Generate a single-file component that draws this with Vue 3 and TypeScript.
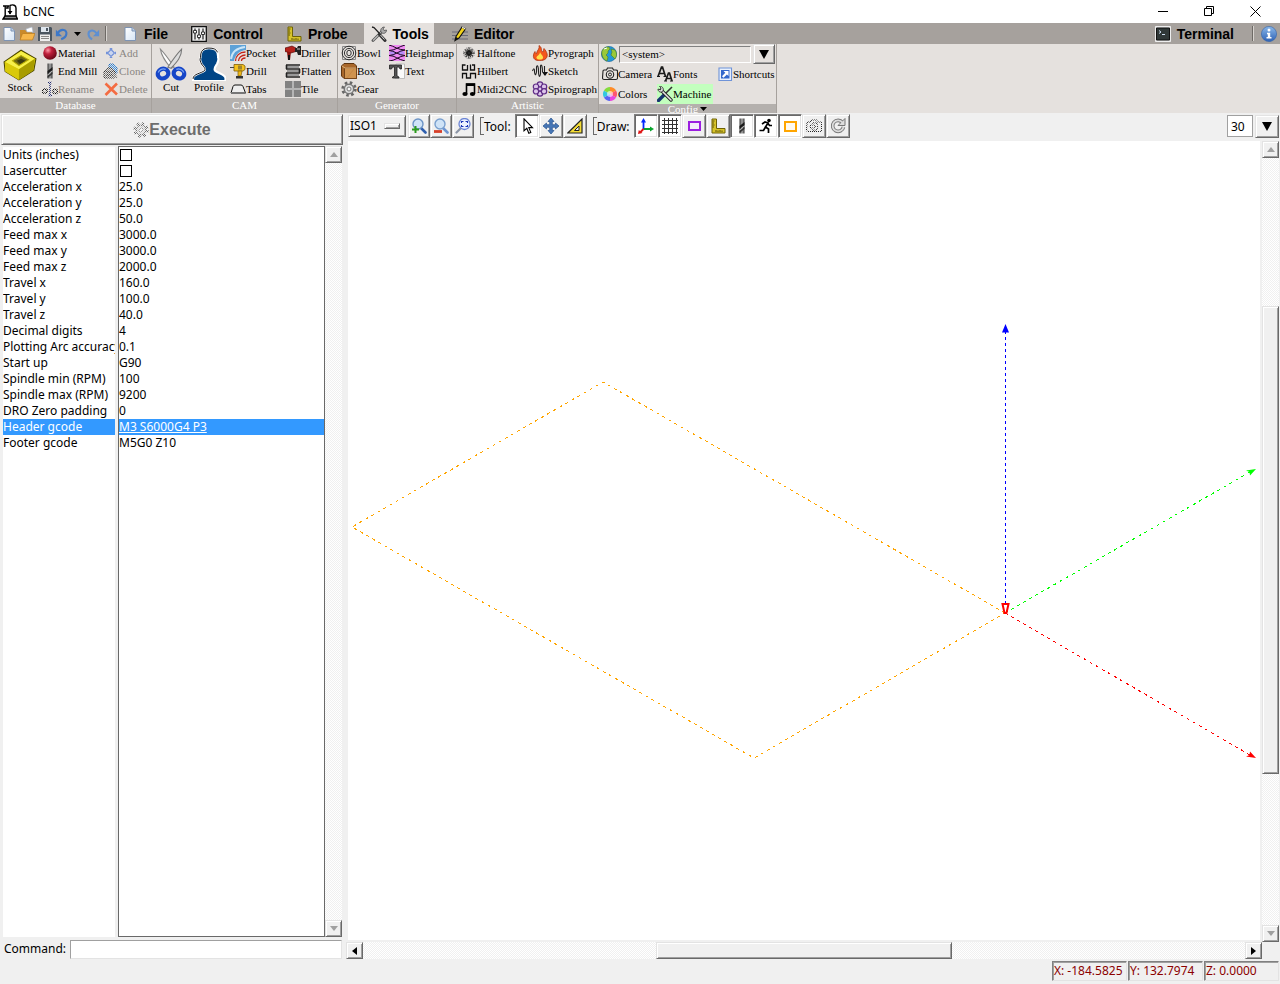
<script setup lang="ts">
import { ref } from 'vue'

interface Tool {
  label: string
  icon: string
  disabled?: boolean
  active?: boolean
  tone?: string
}

interface Group {
  name: string
  cls: string
  big: Tool[]
  columns: Tool[][]
}

interface Setting {
  name: string
  value: string | boolean
}

const tabs: Tool[] = [
  { label: 'File', icon: 'new' },
  { label: 'Control', icon: 'control' },
  { label: 'Probe', icon: 'ruler' },
  { label: 'Tools', icon: 'tools' },
  { label: 'Editor', icon: 'editor' },
]
const activeTab = ref('Tools')

const groups: Group[] = [
  {
    name: 'Database',
    cls: 'database',
    big: [{ label: 'Stock', icon: 'stock' }],
    columns: [
      [
        { label: 'Material', icon: 'material' },
        { label: 'End Mill', icon: 'endmill' },
        { label: 'Rename', icon: 'rename', disabled: true, tone: 'dither' },
      ],
      [
        { label: 'Add', icon: 'add', disabled: true, tone: 'faint' },
        { label: 'Clone', icon: 'clone', disabled: true, tone: 'dither' },
        { label: 'Delete', icon: 'delete', disabled: true, tone: 'faint' },
      ],
    ],
  },
  {
    name: 'CAM',
    cls: 'cam',
    big: [
      { label: 'Cut', icon: 'cut' },
      { label: 'Profile', icon: 'profile' },
    ],
    columns: [
      [
        { label: 'Pocket', icon: 'pocket' },
        { label: 'Drill', icon: 'drill' },
        { label: 'Tabs', icon: 'tabs' },
      ],
      [
        { label: 'Driller', icon: 'driller' },
        { label: 'Flatten', icon: 'flatten' },
        { label: 'Tile', icon: 'tile' },
      ],
    ],
  },
  {
    name: 'Generator',
    cls: 'generator',
    big: [],
    columns: [
      [
        { label: 'Bowl', icon: 'bowl' },
        { label: 'Box', icon: 'box' },
        { label: 'Gear', icon: 'gear' },
      ],
      [
        { label: 'Heightmap', icon: 'heightmap' },
        { label: 'Text', icon: 'text' },
      ],
    ],
  },
  {
    name: 'Artistic',
    cls: 'artistic',
    big: [],
    columns: [
      [
        { label: 'Halftone', icon: 'halftone' },
        { label: 'Hilbert', icon: 'hilbert' },
        { label: 'Midi2CNC', icon: 'midi' },
      ],
      [
        { label: 'Pyrograph', icon: 'pyro' },
        { label: 'Sketch', icon: 'sketch' },
        { label: 'Spirograph', icon: 'spiro' },
      ],
    ],
  },
]

const config: Tool[] = [
  { label: 'Camera', icon: 'camera' },
  { label: 'Fonts', icon: 'fonts' },
  { label: 'Shortcuts', icon: 'shortcuts' },
  { label: 'Colors', icon: 'colors' },
  { label: 'Machine', icon: 'machine', active: true },
]

const settings = ref<Setting[]>([
  { name: 'Units (inches)', value: false },
  { name: 'Lasercutter', value: false },
  { name: 'Acceleration x', value: '25.0' },
  { name: 'Acceleration y', value: '25.0' },
  { name: 'Acceleration z', value: '50.0' },
  { name: 'Feed max x', value: '3000.0' },
  { name: 'Feed max y', value: '3000.0' },
  { name: 'Feed max z', value: '2000.0' },
  { name: 'Travel x', value: '160.0' },
  { name: 'Travel y', value: '100.0' },
  { name: 'Travel z', value: '40.0' },
  { name: 'Decimal digits', value: '4' },
  { name: 'Plotting Arc accuracy', value: '0.1' },
  { name: 'Start up', value: 'G90' },
  { name: 'Spindle min (RPM)', value: '100' },
  { name: 'Spindle max (RPM)', value: '9200' },
  { name: 'DRO Zero padding', value: '0' },
  { name: 'Header gcode', value: 'M3 S6000G4 P3' },
  { name: 'Footer gcode', value: 'M5G0 Z10' },
])
const selected = ref('Header gcode')

const zoomButtons = [
  { label: 'Zoom in', icon: 'zoomin' },
  { label: 'Zoom out', icon: 'zoomout' },
  { label: 'Fit to screen', icon: 'zoomfit' },
]
const toolButtons = ref<Tool[]>([
  { label: 'Select', icon: 'pointer', active: true },
  { label: 'Pan', icon: 'pan' },
  { label: 'Ruler', icon: 'triangle' },
])
const drawButtons = ref<Tool[]>([
  { label: 'Axes', icon: 'axes', active: true },
  { label: 'Grid', icon: 'grid', active: true },
  { label: 'Margins', icon: 'margins' },
  { label: 'Probe', icon: 'ruler' },
  { label: 'Cutting paths', icon: 'endmill', active: true },
  { label: 'Rapid paths', icon: 'rapid', active: true },
  { label: 'Workarea', icon: 'workarea', active: true },
  { label: 'Camera view', icon: 'camera', disabled: true, tone: 'dither' },
  { label: 'Refresh', icon: 'refresh', disabled: true },
])

const view = ref('ISO1')
const controller = ref('<system>')
const drawTime = ref('30')
const command = ref('')
const position = ['X: -184.5825', 'Y: 132.7974', 'Z: 0.0000']
</script>

<template>
  <svg class="sprite" aria-hidden="true">
    <defs>
      <linearGradient id="gBlue" x1="0" y1="0" x2="0" y2="1">
        <stop offset="0" stop-color="#8ab8ea" /><stop offset="1" stop-color="#2f62b5" />
      </linearGradient>
      <linearGradient id="gSteel" x1="0" y1="0" x2="1" y2="0">
        <stop offset="0" stop-color="#333" /><stop offset=".5" stop-color="#aaa" /><stop offset="1" stop-color="#333" />
      </linearGradient>
      <radialGradient id="gRed" cx=".35" cy=".3" r=".7">
        <stop offset="0" stop-color="#ff9aa8" /><stop offset=".4" stop-color="#c0203c" /><stop offset="1" stop-color="#6d0818" />
      </radialGradient>
      <linearGradient id="gPage" x1="0" y1="0" x2="1" y2="1">
        <stop offset="0" stop-color="#fff" /><stop offset="1" stop-color="#d5e4f5" />
      </linearGradient>
    </defs>
    <symbol id="i-app" viewBox="0 0 16 16">
      <g fill="none" stroke="#000" stroke-width="1.4">
        <path d="M1 2h6M3.2 2v10M6 2v2H4M8 1.5c3-1.500 6 0 6 2.500V12M8 5v5M8 1v5" /><path d="M3 12h11l1.500 3H1z" fill="#888" />
      </g>
      <path d="M5.500 7h5L8 10.500z" />
    </symbol>
    <symbol id="i-new" viewBox="0 0 16 16">
      <path d="M3 1.500h7l3.500 3.500v9.500H3z" fill="url(#gPage)" stroke="#7d93b3" /><path d="M10 1.500v3.500h3.500" fill="#bcd0ea" stroke="#7d93b3" />
    </symbol>
    <symbol id="i-open" viewBox="0 0 16 16">
      <path d="M1 4h5l1.500 1.500H13V13H1z" fill="#c98a2b" /><path d="M7 3l6-2 1 5H8z" fill="#fff" stroke="#a9b6c8" stroke-width=".6" />
      <path d="M1 14L3.500 7.500H16L13.500 14z" fill="#f6b64a" stroke="#b97a1c" stroke-width=".7" />
    </symbol>
    <symbol id="i-save" viewBox="0 0 16 16">
      <path d="M1 1h13l1 1v13H1z" fill="#4a5560" /><path d="M4 1h8v5H4z" fill="#dfe6ee" /><path d="M9 2h2v3H9z" fill="#4a5560" /><path d="M3 8.500h10V15H3z" fill="#eee" /><path d="M4 10.500h8M4 12.500h8" stroke="#888" />
    </symbol>
    <symbol id="i-undo" viewBox="0 0 16 16">
      <path d="M3 7c4-6 11-4 10 1-.4 3-3 5-6 6" fill="none" stroke="#3d78c8" stroke-width="2.400" /><path d="M1 3v7.500h7z" fill="#3d78c8" />
    </symbol>
    <symbol id="i-redo" viewBox="0 0 16 16">
      <path d="M12 7C8 2 2 4 3 9c.4 3 2 4 4 5" fill="none" stroke="#5d8fd2" stroke-width="2.400" /><path d="M15 3v7.500H8z" fill="#5d8fd2" />
    </symbol>
    <symbol id="i-control" viewBox="0 0 16 16">
      <path d="M.7.7h14.600v14.600H.7z" fill="#eee" stroke="#111" stroke-width="1.300" /><path d="M4 2.500v11M8 2.500v11M12 2.500v11" stroke="#222" stroke-width="1.200" />
      <path d="M2.500 4.500h3v2.500h-3zM6.500 9h3v2.500h-3zM10.500 6h3v2.500h-3z" fill="#fff" stroke="#222" stroke-width=".9" />
    </symbol>
    <symbol id="i-ruler" viewBox="0 0 16 16">
      <path d="M2 1h4.500v9.500H15V15H2z" fill="#d8c42a" stroke="#6e6205" /><path d="M2.500 3h2M2.500 5h1.500M2.500 7h2M2.500 9h1.500M6 14v-2M8 14v-1.500M10 14v-2M12 14v-1.500" stroke="#3d3600" stroke-width=".8" />
    </symbol>
    <symbol id="i-tools" viewBox="0 0 16 16">
      <path d="M2 14.500L11 5.500" stroke="#555" stroke-width="2.800" stroke-linecap="round" /><path d="M2 14.500L11 5.500" stroke="#bbb" stroke-width="1.200" />
      <path d="M10 6c-1-3 1-5 3.500-5L12 3l1 1.500 2.500-.5c0 3-2.500 4-4.500 3z" fill="#aaa" stroke="#444" stroke-width=".7" />
      <path d="M1 1l2 .5L9 8" fill="none" stroke="#222" stroke-width="1.300" /><path d="M8.500 8.500L14 14.500" stroke="#333" stroke-width="3" stroke-linecap="round" /><path d="M9.500 9L13.500 13.500" stroke="#ddd" stroke-width="1" />
    </symbol>
    <symbol id="i-editor" viewBox="0 0 16 16">
      <path d="M0 6h16M0 9.500h16M0 13h16" stroke="#6b6b78" stroke-width="1.100" /><path d="M3 14.500l1-4L10 1l3.500 2L7 12z" fill="#f3d21b" stroke="#111" stroke-width="1.100" /><path d="M3 14.500l1-3.500 2.500 1.500z" fill="#111" /><path d="M10 1l3.500 2" stroke="#fff" />
    </symbol>
    <symbol id="i-terminal" viewBox="0 0 16 16">
      <path d="M.5.5h15v15H.5z" fill="#ddd" stroke="#eee" /><path d="M1.500 2h13v12h-13z" fill="#303838" stroke="#111" /><path d="M4 4.500l2 1.500-2 1.500M7 8.500h3" stroke="#cde" fill="none" />
    </symbol>
    <symbol id="i-info" viewBox="0 0 16 16">
      <circle cx="8" cy="8" r="7.600" fill="url(#gBlue)" stroke="#3465ac" stroke-width=".6" /><circle cx="8" cy="4" r="1.500" fill="#fff" /><path d="M6 6.700h3.200V11H10.500v1.500h-5V11h1.300V8.200H6z" fill="#fff" />
    </symbol>
    <symbol id="i-stock" viewBox="0 0 32 32">
      <path d="M1 14L17 3l14 8-2 11-14 9L2 23z" fill="#e5d800" stroke="#4d4800" /><path d="M2 14L17 4l13 7-15 10z" fill="#f7f04a" /><path d="M2 14l13 7v10L2 23z" fill="#d9c90a" /><path d="M15 21l15-10-1.500 11L15 31z" fill="#a89c00" />
      <path d="M9 13l8-5 7 4-9 5.500z" fill="#6c6713" stroke="#b7ab00" /><path d="M13 13l4-2 4 2-5 3z" fill="#3c3a10" />
    </symbol>
    <symbol id="i-material" viewBox="0 0 16 16"><circle cx="8" cy="8" r="6.800" fill="url(#gRed)" /></symbol>
    <symbol id="i-endmill" viewBox="0 0 16 16">
      <path d="M5.500.5h5v15h-5z" fill="url(#gSteel)" /><path d="M5.500 8l5-4v3l-5 4z" fill="#1c1c1c" /><path d="M5.500 13l5-4v2l-5 4z" fill="#333" /><path d="M6 12l4-4" stroke="#bbb" stroke-width=".8" />
    </symbol>
    <symbol id="i-rename" viewBox="0 0 16 16">
      <path d="M5 8.500c-3-1-4.500 0-4.500 2s3 2.500 4.500 0v-2.500 4M11 10.500c0-3 4.500-3 4.500 0s-4.500 2.500-4.500 0" fill="none" stroke="#111" stroke-width="1.600" /><path d="M6 1.500h4M6 14.500h4M8 1.500v13" stroke="#222c70" stroke-width="1.600" />
    </symbol>
    <symbol id="i-add" viewBox="0 0 16 16"><path d="M8 3v10M3 8h10" stroke="#5a80d8" stroke-width="2.500" stroke-dasharray="2 1" /><path d="M8 4.500L11.500 8 8 11.500 4.500 8z" fill="#c5d4f4" stroke="#5a80d8" stroke-width="1.200" /></symbol>
    <symbol id="i-clone" viewBox="0 0 16 16">
      <path d="M6 1h5l3 3v6H6z" fill="#3d8fe0" stroke="#1464b4" /><path d="M1 15V9l3-4h5l3 4v6z" fill="#888" stroke="#222" /><path d="M3 9h7M3 12h7" stroke="#111" /><path d="M12 10l3 5h-6" fill="#777" />
    </symbol>
    <symbol id="i-delete" viewBox="0 0 16 16"><path d="M2.500 2.500l11.500 11M14 2.500L2.500 14" stroke="#f8501c" stroke-width="2.600" /></symbol>
    <symbol id="i-cut" viewBox="0 0 32 32">
      <path d="M6 2c1 7 5 12 10 18l3-1C15 13 11 7 6 2z" fill="#fff" stroke="#888" /><path d="M26 2c0 7-4 12-10 18l-3-1C17 13 21 7 26 2z" fill="#ddd" stroke="#777" />
      <g fill="none" stroke="#1746c8" stroke-width="4"><ellipse cx="8.500" cy="25" rx="5" ry="4.500" transform="rotate(-25 8.500 25)" /><ellipse cx="23.500" cy="25" rx="5" ry="4.500" transform="rotate(25 23.500 25)" /></g>
      <path d="M4 24c1-3 4-4 7-3M21 21c3-1 6 0 7 3" fill="none" stroke="#7aa6f5" stroke-width="1.200" />
    </symbol>
    <symbol id="i-profile" viewBox="0 0 32 32">
      <path d="M1 32v-3c1-4 8-4 11-7 1-2-1-3-3-6-1-2-2-4-1-6C8 3 11 1 16 1s9 2 8.500 9c1 2 0 4-1 6-2 3-3 4-2 6 3 3 9 3 10 7v3z" fill="#004586" stroke="#fff" stroke-width="2" /><path d="M1 30c0-5 8-5 11-8 1-2-1-3-3-6-1-2-2-4-1-6C8 3 11 1 16 1c4 0 7 1 8 4" fill="none" stroke="#111" stroke-width=".9" />
    </symbol>
    <symbol id="i-pocket" viewBox="0 0 16 16">
      <path d="M0 0h16v5C10 5 5 10 4 16H0z" fill="#5da2d8" /><path d="M1 14C2 7 7 3 15 2" fill="none" stroke="#cce6f8" stroke-width="2" /><g fill="none" stroke="#c42418" stroke-width="1.300"><path d="M5.500 16c0-5 4-9 10-9M8.500 16c0-3.500 3-6 7-6M11.500 16c0-2 1.500-3 4-3" /></g>
    </symbol>
    <symbol id="i-drill" viewBox="0 0 16 16">
      <path d="M4 1.500h9l2 1.500v3.500L13 8H4z" fill="#f5c21d" stroke="#80600a" stroke-width=".8" /><path d="M0 4.500h4M9 2.500v4M11 2.500v4" stroke="#444" /><path d="M8 8h4l-1 5H8z" fill="#f0b818" stroke="#80600a" stroke-width=".7" /><path d="M6 13h7v2.500H6z" fill="#333" />
    </symbol>
    <symbol id="i-tabs" viewBox="0 0 16 16"><path d="M1 12l2-6.500q.5-1.500 2-1.500h6q1.500 0 2 1.500l2.500 6.500z" fill="#eee" stroke="#111" /><path d="M1 12h14.500" stroke="#777" stroke-width="2" /></symbol>
    <symbol id="i-driller" viewBox="0 0 16 16">
      <path d="M0 3l7-2 4 2v3.500L6 8 0 6.500z" fill="#b5231c" stroke="#400" stroke-width=".6" /><path d="M2 7h4l-1 8H3z" fill="#8b1510" /><path d="M10 3h2l1-2h3v9h-3l-1-3h-2z" fill="#222" /><path d="M12 4h3" stroke="#ccc" /><path d="M3 10h2v5H3z" fill="#111" />
    </symbol>
    <symbol id="i-flatten" viewBox="0 0 16 16">
      <path d="M1 2h14M1 6h14M1 10h14M1 14h14" stroke="#222" stroke-width="1.600" /><path d="M1 4h13M2 8h13M1 12h13" stroke="#999" stroke-width="2" /><path d="M14.500 6v4M1.500 2v4M1.500 10v4" stroke="#222" stroke-width="1.600" />
    </symbol>
    <symbol id="i-tile" viewBox="0 0 16 16"><path d="M0 0h7v7H0zM9 0h7v7H9zM0 9h7v7H0zM9 9h7v7H9z" fill="#828282" /><path d="M7 0h2v16H7zM0 7h16v2H0z" fill="#b5b5b5" /></symbol>
    <symbol id="i-bowl" viewBox="0 0 16 16"><path d="M1.500 1.500h13v13h-13z" fill="none" stroke="#888" /><g fill="none" stroke="#333"><circle cx="8" cy="8" r="6.800" /><circle cx="8" cy="8" r="4.600" /><ellipse cx="8" cy="8" rx="2.200" ry="2.800" /></g></symbol>
    <symbol id="i-box" viewBox="0 0 16 16"><path d="M.5 3L3 .5h10L15.500 3v12.500H3L.5 13z" fill="#a9672a" stroke="#5f3510" /><path d="M3.500 5h12v10.500h-12z" fill="#cf934f" stroke="#75451a" /><path d="M1 3l3 2h11" stroke="#e3b478" fill="none" /><path d="M6 15l7-9" stroke="#c58745" /></symbol>
    <symbol id="i-gear" viewBox="0 0 16 16">
      <circle cx="8" cy="8" r="6.300" fill="none" stroke="#666" stroke-width="2.800" stroke-dasharray="2.500 2.450" /><circle cx="8" cy="8" r="4.700" fill="#ddd" stroke="#777" stroke-width="1.500" /><circle cx="8" cy="8" r="2" fill="#f7f7f7" stroke="#777" />
    </symbol>
    <symbol id="i-heightmap" viewBox="0 0 16 16"><path d="M0 0h16v16H0z" fill="#f08cf4" /><path d="M0 8l4-3 4 3-4 3zM8 8l4-3 4 3-4 3z" fill="#b78cf8" /><path d="M0 0c5 1 9 5 16 5M0 5.500c6 0 10-4 16-5.500M0 5.500c5 0 10 5 16 5M0 10.500c6 0 10-5 16-5.500M0 10.500c6 0 9 4 16 5.500M0 16c6 0 10-5 16-5.500" stroke="#1c0a20" fill="none" stroke-width="1" /></symbol>
    <symbol id="i-text" viewBox="0 0 16 16"><path d="M7 1h8.500v14.500H6z" fill="#fafafa" stroke="#aaa" stroke-width=".7" /><path d="M.5 2h12v4h-1.500L10 4H8v9l2 1v1H3.500v-1l2-1V4h-2l-1 2H.5z" fill="#555" stroke="#222" stroke-width=".8" /></symbol>
    <symbol id="i-halftone" viewBox="0 0 16 16"><circle cx="8" cy="8" r="3" fill="#111" /><g fill="none" stroke="#333" stroke-dasharray="1 1"><circle cx="8" cy="8" r="4" stroke-width="1.500" /><circle cx="8" cy="8" r="5.500" stroke="#777" /></g><path d="M8 2v12M2 8h12M4 4l8 8M12 4l-8 8" stroke="#333" stroke-width=".6" /></symbol>
    <symbol id="i-hilbert" viewBox="0 0 16 16"><path d="M4.500 1.500h-3v5h5v-5M9.500 1v5.500h4v-5H11M1.500 15v-5h4v4.500h4V10h5v5" transform="translate(0 .5)" fill="none" stroke="#111" stroke-width="1.300" /></symbol>
    <symbol id="i-midi" viewBox="0 0 16 16"><path d="M5.500 13V3h8v10" fill="none" stroke="#000" stroke-width="1.600" /><path d="M5 2.500h9V5H5z" /><ellipse cx="4" cy="13" rx="2.600" ry="1.900" /><ellipse cx="11.500" cy="13" rx="2.600" ry="1.900" /></symbol>
    <symbol id="i-pyro" viewBox="0 0 16 16"><path d="M7 .5c4 2.500 1 5 4 6.500 1-1 0-2 1-3.500 3 3.500 4.500 7 2 10-3 3-10 3-12 0C.5 10.500 2 8 3 6.500c0 1 .5 2 1.500 2C5 5 8 4 7 .5z" fill="#f4581c" stroke="#a42808" stroke-width=".7" /><path d="M8 7c1 3 3.500 3.500 3 6-.5 2-5.500 2-6.500 0C4 11 8 10 8 7z" fill="#ffe04a" /></symbol>
    <symbol id="i-sketch" viewBox="0 0 16 16"><path d="M.5 8c1-3 2-3 2 0s1 6 2 1V4c1-3 2 0 2 4s1 8 2 3V3c1-3 2 1 2 6M12.500 3v9" fill="none" stroke="#222" stroke-width="1.100" /><path d="M10 9h6l-3 4z" fill="#111" /></symbol>
    <symbol id="i-spiro" viewBox="0 0 16 16"><g fill="#dcc5ea" stroke="#5e2b85" stroke-width="1.200"><circle cx="8" cy="3.500" r="2.700" /><circle cx="8" cy="12.500" r="2.700" /><circle cx="4" cy="5.700" r="2.700" /><circle cx="12" cy="5.700" r="2.700" /><circle cx="4" cy="10.300" r="2.700" /><circle cx="12" cy="10.300" r="2.700" /><circle cx="8" cy="8" r="2" /></g></symbol>
    <symbol id="i-globe" viewBox="0 0 16 16"><circle cx="8" cy="8" r="7.600" fill="#2498d8" stroke="#0f5d93" stroke-width=".6" /><path d="M1 5c2-4 5-4 7-4l1 2-2 2v2L5 9l2 2-1 4C3 14 0 10 1 5zM10 3l4 1c2 3 2 6 0 9l-2-2-2-2 1-3z" fill="#9ac93a" stroke="#43731a" stroke-width=".5" /><path d="M3 3l3-1" stroke="#fff" /></symbol>
    <symbol id="i-camera" viewBox="0 0 16 16"><path d="M1 5q0-1 1-1h2.500l1-2h5l1 2H14q1.500 0 1.500 1v7q0 1.500-1.500 1.500H2Q.5 13.500.5 12z" fill="none" stroke="#222" stroke-width="1.100" /><circle cx="8" cy="8.500" r="3.700" fill="none" stroke="#222" stroke-width="1.100" /><circle cx="8" cy="8.500" r="1.500" fill="none" stroke="#222" /></symbol>
    <symbol id="i-fonts" viewBox="0 0 16 16"><path d="M1 10.500L4.500 1h1l3 9.500M2.500 7.500h5M8.500 15l3-8h1l2.500 8M9.500 12.500h4.500" fill="none" stroke="#1a1a1a" stroke-width="1.700" /><path d="M0 10.500h3M6.500 10.500h3M7 15h3M13 15h3" stroke="#1a1a1a" /></symbol>
    <symbol id="i-shortcuts" viewBox="0 0 16 16"><path d="M2 2h12.500v12.500H2z" fill="#e9f1fd" stroke="#6f93d8" stroke-width="1.100" /><path d="M4 4h8.500v8.500H4z" fill="#3468cc" /><path d="M6.500 5h5v5l-1.600-1.600L6.500 11.800 5 10.300l3.300-3.500z" fill="#fff" /></symbol>
    <symbol id="i-colors" viewBox="0 0 16 16">
      <path d="M8 8V1a7 7 0 0 1 6.060 3.500z" fill="#ff8c28" /><path d="M8 8l6.060-3.500a7 7 0 0 1 0 7z" fill="#ff5570" /><path d="M8 8l6.060 3.500A7 7 0 0 1 8 15z" fill="#e745e0" /><path d="M8 8v7a7 7 0 0 1-6.060-3.500z" fill="#5a62f5" /><path d="M8 8l-6.060 3.500a7 7 0 0 1 0-7z" fill="#32c8e0" /><path d="M8 8L1.940 4.500A7 7 0 0 1 8 1z" fill="#86dc3c" /><circle cx="8" cy="8" r="3" fill="#fff" opacity=".6" />
    </symbol>
    <symbol id="i-machine" viewBox="0 0 16 16">
      <path d="M15 1l-8 8" stroke="#333" stroke-width="1.600" /><path d="M7.500 8.500L1.500 14.500" stroke="#15356e" stroke-width="3.400" stroke-linecap="round" /><path d="M4 4l10 10" stroke="#222" stroke-width="3.400" stroke-linecap="round" /><path d="M4 4l10 10" stroke="#e6e6e6" stroke-width="1.600" stroke-linecap="round" /><path d="M1 3l2.500 1L4 2 2.500.5C5 0 7 2 6 5 4 7 1 6 1 3z" fill="#e6e6e6" stroke="#222" stroke-width=".8" />
    </symbol>
    <symbol id="i-zoomin" viewBox="0 0 16 16"><path d="M9.500 9.500l5 5" stroke="#2f5fae" stroke-width="2.600" stroke-linecap="round" /><circle cx="7" cy="6" r="5" fill="#cfe3f7" stroke="#6c94c6" stroke-width="1.400" /><path d="M4.500 8v7M1 11.500h7" stroke="#2a9a1c" stroke-width="2" /></symbol>
    <symbol id="i-zoomout" viewBox="0 0 16 16"><path d="M9.500 9.500l5 5" stroke="#6f95d2" stroke-width="2.600" stroke-linecap="round" /><circle cx="7" cy="6" r="5" fill="#cfe3f7" stroke="#7aa0cf" stroke-width="1.400" /><path d="M1 13.500h8" stroke="#d6402a" stroke-width="2.800" /></symbol>
    <symbol id="i-zoomfit" viewBox="0 0 16 16"><path d="M6.500 9.500l-5 5" stroke="#8a94a6" stroke-width="2.200" stroke-linecap="round" /><circle cx="9.500" cy="6" r="5.500" fill="#eef3ff" stroke="#6d86d6" stroke-width="1.300" /><path d="M6.500 5V3.500h2M10.500 3.500h2V5M12.500 7v1.500h-2M8.500 8.500h-2V7" fill="none" stroke="#1c36b8" stroke-width="1.100" /></symbol>
    <symbol id="i-pointer" viewBox="0 0 16 16"><path d="M5 .8v12l2.800-2.500 2 4.900 2-.8-2-4.800h3.700z" fill="#fff" stroke="#000" stroke-width="1.100" /></symbol>
    <symbol id="i-pan" viewBox="0 0 16 16"><path d="M8 0l3 3.500H9.300v3.200h3.200V5L16 8l-3.500 3V9.300H9.300v3.200H11L8 16l-3-3.500h1.700V9.300H3.500V11L0 8l3.500-3v1.700h3.200V3.500H5z" fill="#4878b8" stroke="#24508e" stroke-width=".7" /></symbol>
    <symbol id="i-triangle" viewBox="0 0 16 16"><path d="M.8 15L15 1v14z" fill="#f4dc35" stroke="#222" stroke-width="1.200" /><path d="M7.500 12.500l4.500-4.500v4.500z" fill="#efefef" stroke="#222" /></symbol>
    <symbol id="i-axes" viewBox="0 0 16 16"><path d="M5.500 11V2.500" stroke="#0026ff" stroke-width="1.800" /><path d="M3 4.500L5.500 0 8 4.500z" fill="#0026ff" /><path d="M5.500 11H13" stroke="#08a52c" stroke-width="2" /><path d="M12 8.500l4 2.500-4 2.500z" fill="#08a52c" /><path d="M5.500 11L2 14.500" stroke="#e01414" stroke-width="1.800" /><path d="M0 16l.8-4L4.500 15z" fill="#e01414" /></symbol>
    <symbol id="i-grid" viewBox="0 0 16 16"><path d="M2.500 0v16M6.500 0v16M10.500 0v16M14.500 0v16M0 2.500h16M0 6.500h16M0 10.500h16M0 14.500h16" stroke="#333" shape-rendering="crispEdges" /></symbol>
    <symbol id="i-margins" viewBox="0 0 16 16"><path d="M3 4h11v8H3z" fill="#f4ecfa" stroke="#9b1ee0" stroke-width="2" /></symbol>
    <symbol id="i-workarea" viewBox="0 0 16 16"><path d="M3 4h11v9H3z" fill="#fffaf0" stroke="#ffa500" stroke-width="2" /></symbol>
    <symbol id="i-rapid" viewBox="0 0 16 16"><circle cx="11" cy="2.500" r="1.800" /><path d="M4 6l3-2 3 1-2.500 4 3 2v4M7.500 9l-2 3.500H1.500M10 5.500l1.500 2H14" fill="none" stroke="#000" stroke-width="1.700" /></symbol>
    <symbol id="i-refresh" viewBox="0 0 16 16"><path d="M12.500 4.500A5.500 5.500 0 1 0 13.500 9" fill="none" stroke="#777" stroke-width="3.600" /><path d="M15 .5v7H8z" fill="#ddd" stroke="#777" /><path d="M12.500 4.500A5.500 5.500 0 1 0 13.500 9" fill="none" stroke="#ddd" stroke-width="1.800" /></symbol>
    <symbol id="i-up" viewBox="0 0 8 5"><path d="M0 5L4 0l4 5z" fill="currentColor" /></symbol>
    <symbol id="i-down" viewBox="0 0 8 5" preserveAspectRatio="none"><path d="M0 0h8L4 5z" fill="currentColor" /></symbol>
    <symbol id="i-left" viewBox="0 0 5 8"><path d="M5 0v8L0 4z" fill="currentColor" /></symbol>
    <symbol id="i-right" viewBox="0 0 5 8"><path d="M0 0v8l5-4z" fill="currentColor" /></symbol>
  </svg>

  <div class="window">
    <header class="titlebar">
      <svg class="ic app-icon"><use href="#i-app" /></svg>
      <span class="title">bCNC</span>
      <button class="win-btn" aria-label="Minimize"><svg viewBox="0 0 11 11"><path d="M0 5.500h10" /></svg></button>
      <button class="win-btn" aria-label="Restore"><svg viewBox="0 0 11 11"><path d="M.5 2.500h7v7h-7zM2.500 2.500v-2h7v7h-2" /></svg></button>
      <button class="win-btn" aria-label="Close"><svg viewBox="0 0 11 11"><path d="M.5.500l10 10M10.500.500l-10 10" /></svg></button>
    </header>

    <nav class="tabbar">
      <div class="quick">
        <button aria-label="New"><svg class="ic"><use href="#i-new" /></svg></button>
        <button aria-label="Open"><svg class="ic"><use href="#i-open" /></svg></button>
        <button aria-label="Save"><svg class="ic"><use href="#i-save" /></svg></button>
        <button aria-label="Undo"><svg class="ic small"><use href="#i-undo" /></svg></button>
        <button aria-label="Undo list"><svg class="arrow"><use href="#i-down" /></svg></button>
        <button aria-label="Redo"><svg class="ic small"><use href="#i-redo" /></svg></button>
      </div>
      <span class="sep"></span>
      <div class="tabs">
        <button v-for="t in tabs" :key="t.label" class="tab" :class="{ on: activeTab === t.label }" @click="activeTab = t.label">
          <svg class="ic"><use :href="'#i-' + t.icon" /></svg>{{ t.label }}
        </button>
      </div>
      <button class="tab terminal"><svg class="ic"><use href="#i-terminal" /></svg>Terminal</button>
      <span class="sep"></span>
      <button class="info" aria-label="About"><svg class="ic"><use href="#i-info" /></svg></button>
    </nav>

    <section class="ribbon">
      <div v-for="g in groups" :key="g.name" class="group" :class="g.cls">
        <div class="group-body">
          <button v-for="b in g.big" :key="b.label" class="big">
            <svg class="ic32"><use :href="'#i-' + b.icon" /></svg>{{ b.label }}
          </button>
          <div v-for="(col, i) in g.columns" :key="i" class="col">
            <button v-for="b in col" :key="b.label" class="small-btn" :disabled="b.disabled">
              <svg class="ic" :class="b.tone"><use :href="'#i-' + b.icon" /></svg>{{ b.label }}
            </button>
          </div>
        </div>
        <div class="group-name">{{ g.name }}</div>
      </div>
      <div class="group config">
        <div class="config-top">
          <svg class="ic"><use href="#i-globe" /></svg>
          <input v-model="controller" class="system" aria-label="Language" readonly />
          <button class="raised drop" aria-label="Show languages"><svg class="big-arrow"><use href="#i-down" /></svg></button>
        </div>
        <div class="config-grid">
          <button v-for="b in config" :key="b.label" class="small-btn" :class="{ on: b.active }">
            <svg class="ic"><use :href="'#i-' + b.icon" /></svg>{{ b.label }}
          </button>
        </div>
        <button class="group-name clipped">Config<svg class="arrow"><use href="#i-down" /></svg></button>
      </div>
    </section>

    <main class="main">
      <section class="left">
        <button class="raised execute" disabled><svg class="ic dither"><use href="#i-gear" /></svg>Execute</button>
        <div class="list">
          <table class="settings">
            <colgroup><col class="c-name" /><col class="c-gap" /><col /></colgroup>
            <tbody>
              <tr v-for="(s, i) in settings" :key="s.name" :class="{ sel: selected === s.name }" @click="selected = s.name">
                <th scope="row"><label :for="'set-' + i">{{ s.name }}</label></th>
                <td class="gap"></td>
                <td class="val">
                  <input v-if="typeof s.value === 'boolean'" :id="'set-' + i" v-model="s.value" type="checkbox" />
                  <output v-else :id="'set-' + i">{{ s.value }}</output>
                </td>
              </tr>
              <tr class="fill" aria-hidden="true"><th></th><td class="gap"></td><td class="val"></td></tr>
            </tbody>
          </table>
          <div class="vscroll">
            <button class="raised sb off" aria-label="Scroll list up"><svg class="arrow"><use href="#i-up" /></svg></button>
            <div class="trough"></div>
            <button class="raised sb off" aria-label="Scroll list down"><svg class="arrow"><use href="#i-down" /></svg></button>
          </div>
        </div>
        <div class="command">
          <label for="cmd">Command:</label>
          <input id="cmd" v-model="command" type="text" />
        </div>
      </section>

      <section class="right">
        <div class="toolbar">
          <div class="raised view">
            <select v-model="view" aria-label="View">
              <option>X-Y</option><option>X-Z</option><option>Y-Z</option><option>ISO1</option><option>ISO2</option><option>ISO3</option>
            </select>
            <span class="raised knob"></span>
          </div>
          <div class="btns tight">
            <button v-for="b in zoomButtons" :key="b.label" class="raised tb" :aria-label="b.label"><svg class="ic"><use :href="'#i-' + b.icon" /></svg></button>
          </div>
          <span class="tb-label">Tool:</span>
          <div class="btns">
            <button v-for="b in toolButtons" :key="b.label" class="raised tb" :class="{ pressed: b.active }" :aria-label="b.label"><svg class="ic"><use :href="'#i-' + b.icon" /></svg></button>
          </div>
          <span class="tb-label">Draw:</span>
          <div class="btns">
            <button v-for="b in drawButtons" :key="b.label" class="raised tb" :class="{ pressed: b.active }" :disabled="b.disabled" :aria-label="b.label"><svg class="ic" :class="b.tone"><use :href="'#i-' + b.icon" /></svg></button>
          </div>
          <span class="spacer"></span>
          <input v-model="drawTime" class="time" aria-label="Draw timeout" />
          <button class="raised drop" aria-label="Show timeouts"><svg class="big-arrow"><use href="#i-down" /></svg></button>
        </div>
        <div class="stage">
          <svg class="canvas" viewBox="348 141 912 799" role="img" aria-label="Work area">
            <g fill="none" stroke-width="1" stroke-dasharray="3 4" shape-rendering="crispEdges">
              <path d="M1005 613L603 382 352 527 754 758z" stroke="#ffa500" />
              <path d="M1005 613L1250 472" stroke="#0f0" />
              <path d="M1005 613L1250 755" stroke="#f00" />
              <path d="M1005.500 331V606" stroke="#00f" stroke-dasharray="3 3" />
            </g>
            <path d="M1005.500 324l3.500 8.500h-7z" fill="#00f" />
            <path d="M1256 469l-6 6.500-.5-3.500-3.500-1.500z" fill="#0f0" />
            <path d="M1256 758l-10-1.500 3.500-1.500.5-3.500z" fill="#f00" />
            <path d="M1002.500 604h6l-2 9h-2z" fill="none" stroke="#f00" stroke-width="2" />
          </svg>
          <div class="vscroll">
            <button class="raised sb off" aria-label="Scroll up"><svg class="arrow"><use href="#i-up" /></svg></button>
            <div class="trough v1"></div>
            <div class="raised thumb vthumb"></div>
            <div class="trough v2"></div>
            <button class="raised sb off" aria-label="Scroll down"><svg class="arrow"><use href="#i-down" /></svg></button>
          </div>
          <div class="hscroll">
            <button class="raised sb" aria-label="Scroll left"><svg class="side"><use href="#i-left" /></svg></button>
            <div class="trough h1"></div>
            <div class="raised thumb hthumb"></div>
            <div class="trough h1"></div>
            <button class="raised sb" aria-label="Scroll right"><svg class="side"><use href="#i-right" /></svg></button>
          </div>
        </div>
      </section>
    </main>

    <footer class="status">
      <output v-for="p in position" :key="p" class="coord">{{ p }}</output>
    </footer>
  </div>
</template>

<style>
body {
  margin: 0;
  background: #f0f0f0;
}
</style>

<style scoped>
* {
  box-sizing: border-box;
}
.sprite {
  position: absolute;
  width: 0;
  height: 0;
}
.window {
  display: flex;
  flex-direction: column;
  min-height: 100vh;
  background: #f0f0f0;
  color: #000;
  font: 12px/16px "Noto Sans", "Open Sans", sans-serif;
}
button,
input,
select {
  font: inherit;
  color: inherit;
  margin: 0;
  padding: 0;
  border: 0;
  border-radius: 0;
  background: none;
  outline: 0;
}
button {
  display: flex;
  align-items: center;
}
svg {
  display: block;
  flex: none;
}
.ic {
  width: 16px;
  height: 16px;
}
.ic.small {
  width: 14px;
  height: 14px;
}
.ic32 {
  width: 34px;
  height: 34px;
}
.arrow {
  width: 8px;
  height: 5px;
}
.side {
  width: 5px;
  height: 8px;
}
.big-arrow {
  width: 10px;
  height: 9px;
}
.dither {
  -webkit-mask: repeating-conic-gradient(#000 0 25%, transparent 0 50%) 0 0 / 2px 2px;
  mask: repeating-conic-gradient(#000 0 25%, transparent 0 50%) 0 0 / 2px 2px;
}
.faint {
  opacity: 0.8;
}
.raised {
  border: 1px solid;
  border-color: #e3e3e3 #696969 #696969 #e3e3e3;
  box-shadow: inset 1px 1px #fff, inset -1px -1px #a0a0a0;
  background: #f0f0f0;
}
.raised.pressed {
  border-color: #808080 #fff #fff #808080;
  box-shadow: inset 1px 1px #696969, inset -1px -1px #e3e3e3;
  background: #fff;
}

.titlebar {
  display: flex;
  align-items: center;
  height: 23px;
  padding-left: 2px;
  background: #fff;
}
.title {
  flex: 1;
  padding-left: 5px;
}
.win-btn {
  justify-content: center;
  width: 46px;
  height: 22px;
}
.win-btn svg {
  width: 11px;
  height: 11px;
  fill: none;
  stroke: #000;
}
.win-btn:last-child {
  margin-right: 2px;
}

.tabbar {
  display: flex;
  align-items: center;
  height: 21px;
  background: #a6a19d;
}
.quick {
  display: flex;
  align-items: center;
  gap: 2px;
  width: 105px;
  padding-left: 1px;
}
.quick .arrow {
  width: 7px;
  height: 4px;
  margin: 0 3px;
}
.sep {
  width: 2px;
  height: 15px;
  border-left: 1px solid #6e6a66;
  border-right: 1px solid #d8d4d0;
}
.tabs {
  display: flex;
  flex: 1;
  gap: 11px;
  padding-left: 8px;
}
.tab {
  gap: 6px;
  height: 21px;
  padding: 0 5px 0 7px;
  font: bold 14px/20px "Liberation Sans", Arial, sans-serif;
}
.tab.on {
  background: #e5e1de;
}
.terminal {
  margin-right: 13px;
}
.info {
  margin: 0 3px 0 7px;
}

.ribbon {
  display: flex;
  height: 69px;
  background: #e5e1de;
  font: 11px/14px "Liberation Serif", "Times New Roman", serif;
}
.group {
  display: flex;
  flex-direction: column;
  border-right: 1px solid #a6a19d;
}
.group-body {
  display: flex;
  flex: 1;
}
.group-name {
  display: block;
  height: 15px;
  background: #b4b0ad;
  color: #fff;
  text-align: center;
}
.database {
  width: 152px;
}
.cam {
  width: 186px;
}
.generator {
  width: 119px;
}
.artistic {
  width: 142px;
}
.config {
  width: 178px;
}
.big {
  flex-direction: column;
  width: 38px;
  padding-top: 3px;
  line-height: 12px;
}
.database .big {
  width: 40px;
}
.col {
  flex: 1;
}
.database .col,
.cam .col {
  padding-left: 2px;
}
.database .col:last-child {
  flex: 0 0 50px;
}
.cam .col:last-child {
  flex: 0 0 54px;
}
.generator .col {
  padding-left: 3px;
}
.generator .col:last-child {
  flex: 0 0 70px;
}
.artistic .col {
  padding-left: 4px;
}
.artistic .col:last-child {
  flex: 0 0 70px;
}
.small-btn {
  height: 18px;
  white-space: nowrap;
}
.small-btn:disabled {
  color: #8a8682;
}
.config-top {
  display: flex;
  align-items: center;
  gap: 2px;
  height: 20px;
  padding: 0 1px 0 2px;
}
.system {
  flex: 1;
  min-width: 0;
  height: 17px;
  padding-left: 2px;
  border: 1px solid;
  border-color: #808080 #fff #fff #808080;
  background: #e5e1de;
}
.drop {
  justify-content: center;
  width: 22px;
  height: 20px;
}
.config .drop {
  background: #e5e1de;
}
.config-grid {
  display: grid;
  flex: 1;
  grid-template-columns: 55px 60px 1fr;
  padding-left: 3px;
}
.config-grid .small-btn {
  height: 20px;
}
.config-grid .on {
  justify-self: start;
  padding-right: 2px;
  background: #c3ffbe;
}
.clipped {
  display: flex;
  justify-content: center;
  height: 9px;
  overflow: hidden;
}
.clipped .arrow {
  width: 7px;
  height: 4px;
  margin-left: 2px;
  color: #000;
}

.main {
  display: flex;
  flex: 1;
}
.left {
  display: flex;
  flex-direction: column;
  width: 343px;
  padding-top: 1px;
}
.execute {
  justify-content: center;
  height: 31px;
  margin: 0 0 1px 1px;
  color: #6d6d6d;
  font: bold 16px/20px "Liberation Sans", Arial, sans-serif;
}
.list {
  display: flex;
  flex: 1;
  padding: 0 1px 0 3px;
}
.settings {
  flex: 1;
  width: 100%;
  height: 100%;
  table-layout: fixed;
  border-collapse: separate;
  border-spacing: 0;
  border-top: 1px solid #f0f0f0;
}
.c-name {
  width: 112px;
}
.c-gap {
  width: 3px;
}
.settings tr {
  height: 16px;
}
.settings tr.fill {
  height: auto;
}
.settings th,
.settings td {
  padding: 0;
  overflow: hidden;
  background: #fff;
  font-weight: normal;
  text-align: left;
  white-space: nowrap;
  line-height: 16px;
}
.settings .gap {
  background: #f0f0f0;
}
.settings .val {
  border-left: 1px solid #696969;
  border-right: 1px solid #696969;
}
.settings tr:first-child .val {
  box-shadow: 0 -1px #696969;
}
.settings .fill .val {
  border-bottom: 1px solid #696969;
}
.settings .sel th,
.settings .sel .val {
  background: #3399ff;
  color: #fff;
}
.sel output {
  text-decoration: underline;
}
.settings input {
  display: block;
  appearance: none;
  width: 12px;
  height: 12px;
  margin: 2px 1px;
  border: 1px solid #000;
  background: #fff;
}
.settings input:checked {
  background: #000;
}
.vscroll {
  display: flex;
  flex: none;
  flex-direction: column;
  width: 17px;
}
.sb {
  justify-content: center;
  width: 17px;
  height: 17px;
}
.sb.off {
  color: #a0a0a0;
}
.trough {
  flex: 1;
  background: repeating-conic-gradient(#fff 0 25%, #f0f0f0 0 50%) 0 0 / 2px 2px;
}
.command {
  display: flex;
  align-items: center;
  gap: 4px;
  height: 23px;
  padding: 1px 1px 0 4px;
}
.command input {
  flex: 1;
  min-width: 0;
  height: 19px;
  border: 1px solid;
  border-color: #a0a0a0 #e3e3e3 #e3e3e3 #a0a0a0;
  background: #fff;
}

.right {
  display: flex;
  flex: 1;
  flex-direction: column;
  min-width: 0;
  padding: 0 0 1px 3px;
}
.toolbar {
  display: flex;
  align-items: center;
  height: 28px;
  padding: 0 1px 2px 2px;
}
.view {
  display: flex;
  align-items: center;
  width: 58px;
  height: 22px;
  padding: 0 5px 0 1px;
}
.view select {
  flex: 1;
  min-width: 0;
  appearance: none;
}
.knob {
  width: 16px;
  height: 6px;
}
.btns {
  display: flex;
  margin-left: 4px;
}
.tb {
  justify-content: center;
  width: 24px;
  height: 24px;
}
.tight {
  margin-left: 2px;
}
.tight .tb {
  width: 22px;
}
.tb-label {
  display: flex;
  align-items: center;
  margin-left: 6px;
  line-height: 15px;
}
.tb-label::before {
  content: "";
  width: 3px;
  height: 16px;
  border: 1px solid #696969;
  border-right: 0;
}
.spacer {
  flex: 1;
}
.time {
  width: 26px;
  height: 22px;
  margin-right: 2px;
  padding-left: 3px;
  border: 1px solid #a0a0a0;
  background: #fff;
}
.toolbar .drop {
  width: 24px;
  height: 23px;
}
.stage {
  display: grid;
  flex: 1;
  grid-template-columns: 1fr 17px;
  grid-template-rows: 1fr 17px;
  padding: 0 1px 0 0;
}
.canvas {
  width: calc(100% - 4px);
  height: calc(100% - 2px);
  min-height: 400px;
  margin-left: 2px;
  background: #fff;
}
.vscroll .v1 {
  flex: 148 1 0;
}
.vscroll .v2 {
  flex: 151 1 0;
}
.vthumb {
  flex: 468 1 0;
}
.hscroll {
  display: flex;
}
.hscroll .h1 {
  flex: 293 1 0;
}
.hthumb {
  flex: 295 1 0;
}

.status {
  display: flex;
  justify-content: flex-end;
  gap: 1px;
  height: 24px;
  padding: 1px 1px 3px 0;
}
.coord {
  width: 75px;
  padding-left: 1px;
  border: 1px solid;
  border-color: #808080 #e3e3e3 #e3e3e3 #808080;
  box-shadow: inset 1px 1px #a0a0a0;
  color: #8b0000;
  line-height: 18px;
  white-space: nowrap;
}
</style>
